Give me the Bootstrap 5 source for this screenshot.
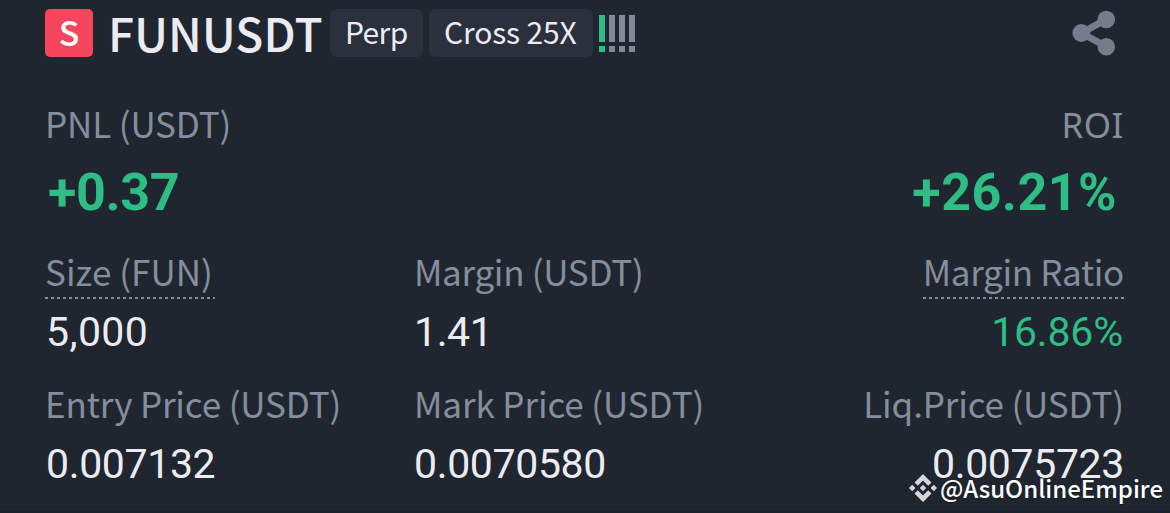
<!DOCTYPE html>
<html lang="en">
<head>
<meta charset="utf-8">
<meta name="viewport" content="width=device-width, initial-scale=1">
<title>FUNUSDT position</title>
<link href="https://cdn.jsdelivr.net/npm/bootstrap@5.3.0/dist/css/bootstrap.min.css" rel="stylesheet">
<style>
body{background:#202630;color:#eaecef;font-family:"Noto Sans CJK SC","Noto Sans",sans-serif;overflow:hidden}
.position{height:513px;padding:9px 45px 0;border-bottom:2px solid #1b2029;color:#ebecf2}
.head{height:48px}
.side{width:48px;height:48px;border-radius:5px;background:#f6465d;color:#fff;font-size:34px;font-weight:500;line-height:46px}
.pair{width:237px;padding-left:15px;font-size:46px;font-weight:500;line-height:47px;letter-spacing:.15px;white-space:nowrap}
.chip{height:48px;border-radius:6px;background:#2a303c;font-size:30px;line-height:45px;letter-spacing:-.15px;padding-left:15px;white-space:nowrap}
.line3{display:grid;grid-template-columns:369px 1fr auto;white-space:nowrap}
.key{height:44px;line-height:44px;font-size:35px;color:#848e9c;letter-spacing:-.15px}
.key-roi{font-family:"Noto Sans",sans-serif;letter-spacing:.5px;line-height:47px;padding-right:1px}
.dash{display:inline-block;height:51px;background:repeating-linear-gradient(90deg,#848e9c 0 3px,transparent 3px 6px) 0 48px/100% 2px no-repeat}
.num{height:44px;line-height:44px;font-family:Roboto,sans-serif;font-size:41px;letter-spacing:-.35px}
.big{height:60px;line-height:61px;font-size:52px;font-weight:700}
.gain{color:#2ebd85}
.owner{position:absolute;right:7px;bottom:5px;font-size:24px;font-weight:500;line-height:36px;color:#fff;text-shadow:0 1px 2px #0006}
</style>
</head>
<body>
<main class="position position-relative">
  <header class="head d-flex">
    <div class="side text-center">S</div>
    <div class="pair">FUNUSDT</div>
    <div class="chip" style="width:93px;letter-spacing:-.6px">Perp</div>
    <div class="chip" style="width:164px;margin-left:6px">Cross 25X</div>
    <svg width="36" height="37" style="margin:6px 0 0 6px" fill="#848997"><path fill="#2ebd85" d="M0 0h6v27H0zM0 31h6v6H0z"/><path d="M10 0h6v27h-6zM10 31h6v6h-6zM20 0h6v27h-6zM20 31h6v6h-6zM30 0h6v27h-6zM30 31h6v6h-6z"/></svg>
    <svg class="ms-auto" width="44" height="46" style="margin:1px 9px 0 0" fill="#767c8b"><path d="M34 9.500 9.500 23l24.500 13.500" fill="none" stroke="#767c8b" stroke-width="7"/><circle cx="34.300" cy="9.500" r="8.800"/><circle cx="9.300" cy="23" r="8.900"/><circle cx="34.300" cy="36.800" r="8.800"/></svg>
  </header>

  <section class="d-flex justify-content-between" style="margin-top:44px">
    <div>
      <div class="key">PNL (USDT)</div>
      <div class="num big gain" style="margin-top:17px;padding-left:3px">+0.37</div>
    </div>
    <div class="text-end">
      <div class="key key-roi">ROI</div>
      <div class="num big gain" style="margin-top:17px;padding-right:8px;letter-spacing:.5px">+26.21%</div>
    </div>
  </section>

  <section class="line3" style="margin-top:27px">
    <div>
      <div class="key dash" style="padding-right:2px;letter-spacing:.05px">Size (FUN)</div>
      <div class="num" style="margin-top:10px;letter-spacing:.4px;padding-left:1px">5,000</div>
    </div>
    <div>
      <div class="key" style="letter-spacing:-.3px">Margin (USDT)</div>
      <div class="num" style="margin-top:17px;letter-spacing:-.4px">1.41</div>
    </div>
    <div class="text-end">
      <div class="key dash" style="letter-spacing:-.33px;padding-right:1px">Margin Ratio</div>
      <div class="num gain" style="margin-top:10px;letter-spacing:-.2px;padding-right:2px">16.86%</div>
    </div>
  </section>

  <section class="line3" style="margin-top:27px">
    <div>
      <div class="key">Entry Price (USDT)</div>
      <div class="num" style="margin-top:17px;padding-left:1px">0.007132</div>
    </div>
    <div>
      <div class="key" style="letter-spacing:-.1px">Mark Price (USDT)</div>
      <div class="num" style="margin-top:17px">0.0070580</div>
    </div>
    <div class="text-end">
      <div class="key" style="padding-right:1px">Liq.Price (USDT)</div>
      <div class="num" style="margin-top:17px;padding-right:1px">0.0075723</div>
    </div>
  </section>

  <div class="owner d-flex align-items-center">
    <svg width="28" height="28" viewBox="0 0 28 28" style="margin-right:3px" fill="#d9d6da"><path d="M14 0l8.500 8.500-3.300 3.300L14 6.600l-5.200 5.200-3.300-3.300zM14 28l8.500-8.500-3.300-3.300-5.200 5.200-5.200-5.200-3.300 3.300zM3.200 10.800 6.400 14l-3.200 3.200L0 14zM24.800 10.800 28 14l-3.200 3.200-3.200-3.200zM14 10.800l3.200 3.200-3.200 3.200-3.200-3.200z"/></svg>
    <span>@AsuOnlineEmpire</span>
  </div>
</main>
<script src="https://cdn.jsdelivr.net/npm/bootstrap@5.3.0/dist/js/bootstrap.bundle.min.js"></script>
</body>
</html>
